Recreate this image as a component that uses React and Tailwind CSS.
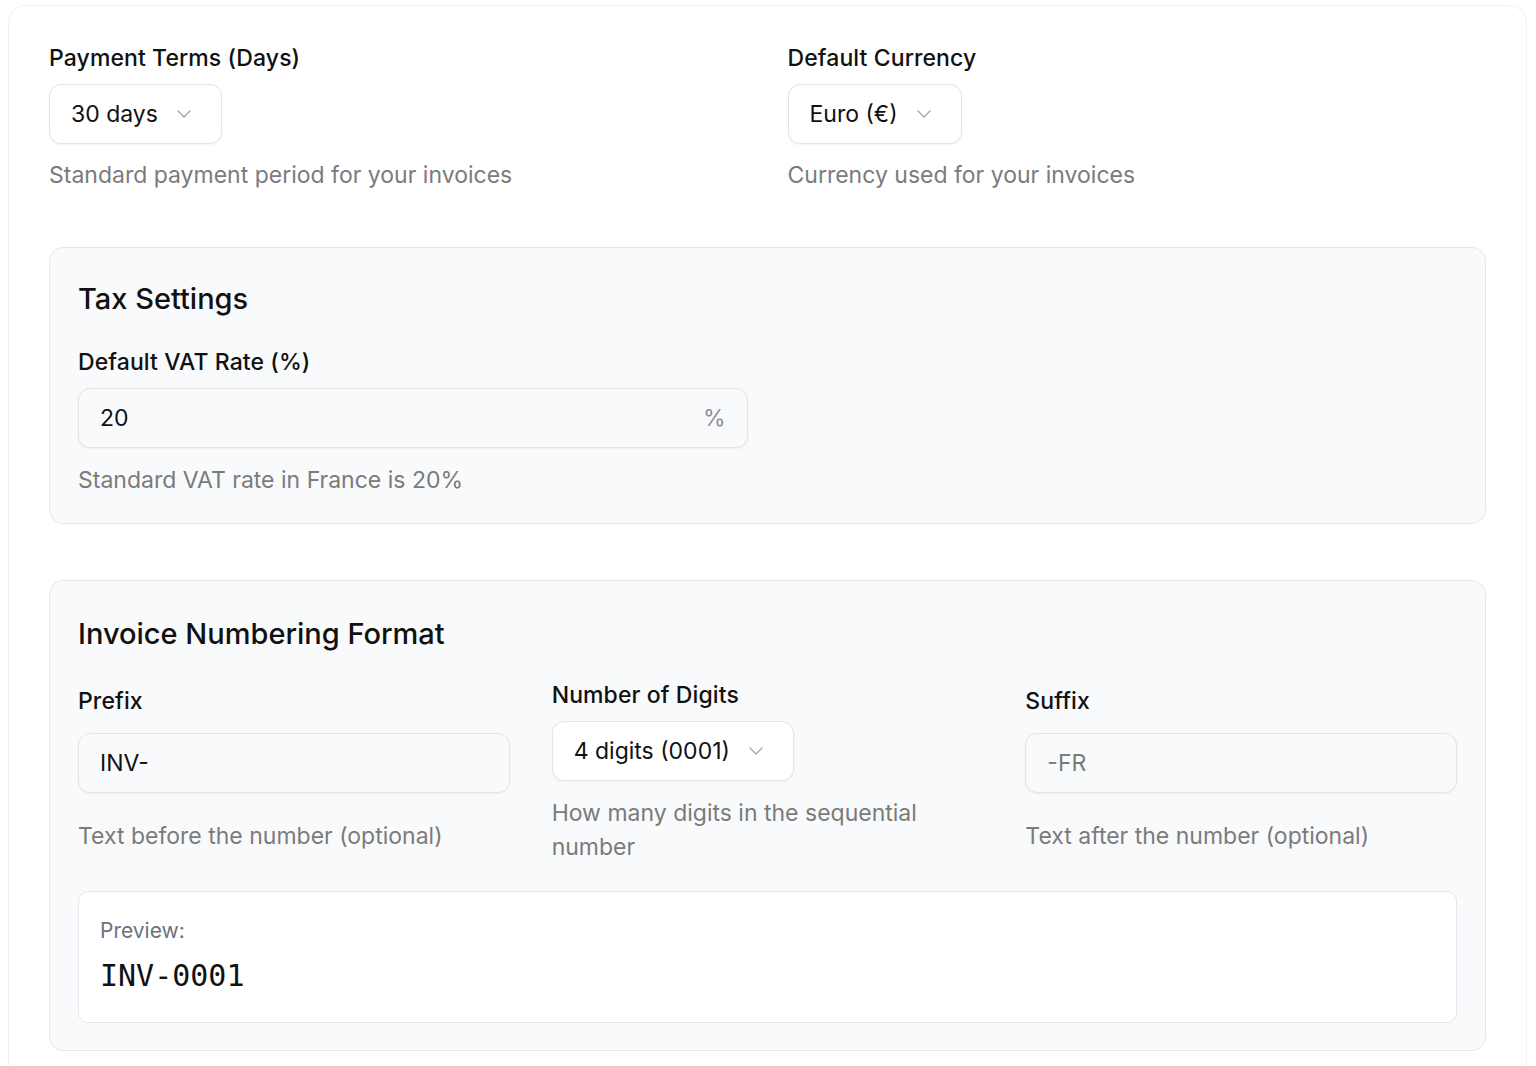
import { ChevronDown } from 'lucide-react';

const font = { fontFamily: 'Inter, "Noto Sans", sans-serif' };

function Label({ children, className = '' }) {
  return (
    <div className={`text-[23px] leading-[30px] font-medium tracking-[0.1px] text-[#111111] ${className}`}>
      {children}
    </div>
  );
}

function Help({ children, className = '' }) {
  return <p className={`text-[23px] leading-[34px] text-[#7b7b7b] ${className}`}>{children}</p>;
}

function Select({ value, className = '' }) {
  return (
    <div
      className={`inline-flex h-[60px] items-center gap-[14px] rounded-[12px] border border-[#e4e4e7] bg-white pl-[21px] pr-[25px] shadow-[0_1px_2px_rgba(0,0,0,0.05)] ${className}`}
    >
      <span className="text-[23px] text-[#111111]">{value}</span>
      <ChevronDown size={24} strokeWidth={1.3} className="text-[#a1a1aa]" />
    </div>
  );
}

function Input({ value, muted, suffix }) {
  return (
    <div className="flex h-[60px] w-full items-center justify-between rounded-[12px] border border-[#e4e4e7] bg-[#f9fafb] px-[21px] shadow-[0_1px_2px_rgba(0,0,0,0.05)]">
      <span className={`text-[23px] ${muted ? 'text-[#7b7b7b]' : 'text-[#111111]'}`}>{value}</span>
      {suffix && <span className="text-[23px] text-[#8b8f98]">{suffix}</span>}
    </div>
  );
}

export default function App() {
  return (
    <div className="min-h-screen bg-white pl-2 pr-[9px] pt-[5px]" style={font}>
      <div className="rounded-t-[18px] border border-b-0 border-[#f1f1f2] bg-white px-10 pt-[37px] pb-10">
        {/* General */}
        <div className="grid grid-cols-2 gap-10">
          <div>
            <Label>Payment Terms (Days)</Label>
            <Select value="30 days" className="mt-[11px]" />
            <Help className="mt-[14px]">Standard payment period for your invoices</Help>
          </div>
          <div>
            <Label>Default Currency</Label>
            <Select value="Euro (€)" className="mt-[11px]" />
            <Help className="mt-[14px]">Currency used for your invoices</Help>
          </div>
        </div>

        {/* Tax Settings */}
        <div className="mt-[55px] rounded-[14px] border border-[#e5e7eb] bg-[#f9fafb] px-[28px] pt-[33px] pb-[26px]">
          <h3 className="text-[29px] leading-[36px] font-medium text-[#111111]">Tax Settings</h3>
          <div className="mt-[30px] grid grid-cols-2 gap-10">
            <div>
              <Label>Default VAT Rate (%)</Label>
              <div className="mt-[11px]">
                <Input value="20" suffix="%" />
              </div>
              <Help className="mt-[15px]">Standard VAT rate in France is 20%</Help>
            </div>
          </div>
        </div>

        {/* Invoice Numbering */}
        <div className="mt-[56px] rounded-[14px] border border-[#e5e7eb] bg-[#f9fafb] px-[28px] pt-[35px] pb-[27px]">
          <h3 className="text-[29px] leading-[36px] font-medium text-[#111111]">Invoice Numbering Format</h3>
          <div className="mt-[28px] grid grid-cols-3 items-start gap-[42px]">
            <div className="mt-[6px]">
              <Label>Prefix</Label>
              <div className="mt-[17px]">
                <Input value="INV-" />
              </div>
              <Help className="mt-[26px]">Text before the number (optional)</Help>
            </div>
            <div>
              <Label>Number of Digits</Label>
              <Select value="4 digits (0001)" className="mt-[11px]" />
              <Help className="mt-[15px]">How many digits in the sequential number</Help>
            </div>
            <div className="mt-[6px]">
              <Label>Suffix</Label>
              <div className="mt-[17px]">
                <Input value="-FR" muted />
              </div>
              <Help className="mt-[26px]">Text after the number (optional)</Help>
            </div>
          </div>

          <div className="mt-[27px] rounded-[10px] border border-[#e5e7eb] bg-white px-[21px] pt-[25px] pb-[28px]">
            <div className="text-[21px] leading-[28px] text-[#6b7280]">Preview:</div>
            <div
              className="mt-[13px] text-[30px] leading-[36px] text-[#111111]"
              style={{ fontFamily: '"DejaVu Sans Mono", "Liberation Mono", monospace' }}
            >
              INV-0001
            </div>
          </div>
        </div>
      </div>
    </div>
  );
}
